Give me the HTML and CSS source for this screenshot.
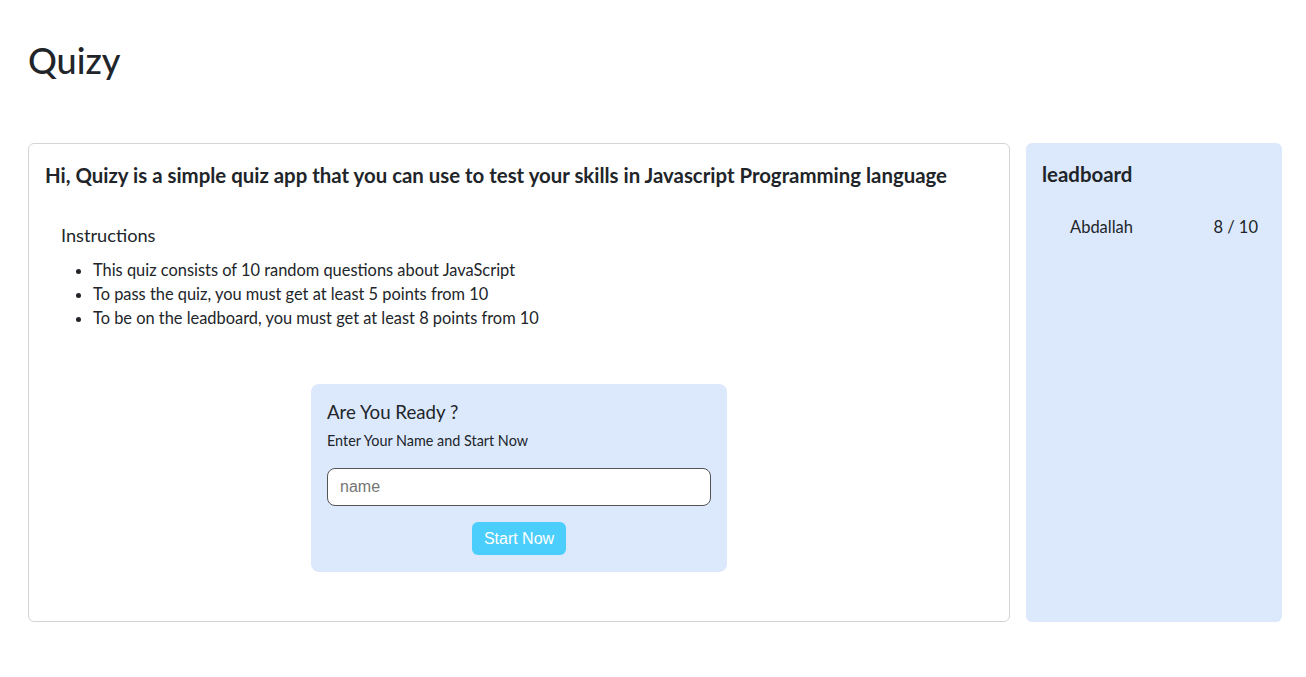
FILE: index.html
```html
<!DOCTYPE html>
<html lang="en">
<head>
<meta charset="utf-8">
<title>Quizy</title>
<link rel="stylesheet" href="styles.css">
</head>
<body>
<div class="page">
  <h1 class="title">Quizy</h1>
  <div class="layout">
    <section class="card">
      <h2 class="intro">Hi, Quizy is a simple quiz app that you can use to test your skills in Javascript Programming language</h2>
      <div class="instructions">
        <h3 class="inst-title">Instructions</h3>
        <ul class="inst-list">
          <li>This quiz consists of 10 random questions about JavaScript</li>
          <li>To pass the quiz, you must get at least 5 points from 10</li>
          <li>To be on the leadboard, you must get at least 8 points from 10</li>
        </ul>
      </div>
      <div class="ready">
        <h3 class="ready-title">Are You Ready ?</h3>
        <p class="ready-sub">Enter Your Name and Start Now</p>
        <input class="name-input" type="text" placeholder="name">
        <div class="btn-row"><button class="start-btn">Start Now</button></div>
      </div>
    </section>
    <aside class="board">
      <h2 class="board-title">leadboard</h2>
      <div class="board-row"><span>Abdallah</span><span>8 / 10</span></div>
    </aside>
  </div>
</div>
</body>
</html>
```
FILE: styles.css
```css
* { box-sizing: border-box; }
body {
  margin: 0;
  font-family: Lato, "Noto Sans", sans-serif;
  color: #212529;
  background: #fff;
}
.page {
  padding: 36px 24px 0 28px;
}
.title {
  margin: 0;
  font-size: 36px;
  font-weight: 500;
  line-height: 48px;
}
.layout {
  display: grid;
  grid-template-columns: 982px 256px;
  gap: 16px;
  margin-top: 59px;
}
.card {
  border: 1px solid #d4d4d4;
  border-radius: 6px;
  padding: 16px 16px 49px;
}
.intro {
  margin: 0;
  font-size: 20.4px;
  font-weight: 700;
  line-height: 30px;
  white-space: nowrap;
}
.instructions {
  padding: 32px 16px 0;
}
.inst-title {
  margin: 0;
  font-size: 18.2px;
  font-weight: 400;
  line-height: 27px;
}
.inst-list {
  margin: 9px 0 0;
  padding-left: 32px;
  font-size: 16.4px;
  line-height: 24px;
}
.ready {
  width: 416px;
  margin: 54px auto 0;
  background: #dce9fd;
  border-radius: 8px;
  padding: 16px 16px 17px;
}
.ready-title {
  margin: 0;
  font-size: 18.7px;
  font-weight: 400;
  line-height: 24px;
}
.ready-sub {
  margin: 7px 0 0;
  font-size: 14.4px;
  line-height: 20px;
}
.name-input {
  display: block;
  width: 100%;
  height: 38px;
  margin-top: 17px;
  border: 1px solid #555;
  border-radius: 8px;
  padding: 0 12px;
  font-family: "Liberation Sans", Arial, sans-serif;
  font-size: 16px;
  background: #fff;
}
.name-input::placeholder { color: #757575; }
.btn-row {
  display: flex;
  justify-content: center;
  margin-top: 16px;
}
.start-btn {
  height: 33px;
  width: 94px;
  border: none;
  border-radius: 6px;
  background: #4ccefd;
  color: #fff;
  font-family: "Liberation Sans", Arial, sans-serif;
  font-size: 16px;
  padding: 0;
}
.board {
  background: #dce9fd;
  border-radius: 6px;
  padding: 16px;
}
.board-title {
  margin: 0;
  font-size: 20.4px;
  font-weight: 700;
  line-height: 30px;
}
.board-row {
  display: flex;
  justify-content: space-between;
  margin-top: 26px;
  padding: 0 8px 0 28px;
  font-size: 16.5px;
  line-height: 24px;
}
```
